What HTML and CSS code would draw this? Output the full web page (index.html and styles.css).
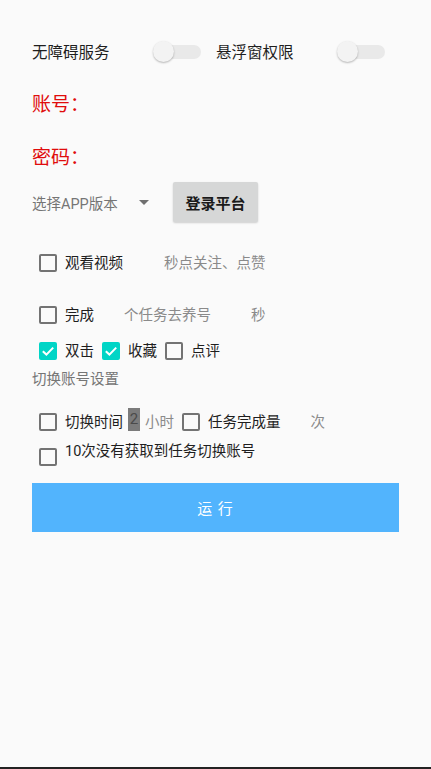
FILE: index.html
```html
<!DOCTYPE html>
<html lang="zh-CN">
<head>
<meta charset="utf-8">
<title>设置</title>
<link rel="stylesheet" href="styles.css">
</head>
<body>
<div class="screen">
  <main class="content">
    <div class="row row-switches">
      <span class="switch-label">无障碍服务</span>
      <span class="switch"><span class="track"></span><span class="thumb"></span></span>
      <span class="switch-label second">悬浮窗权限</span>
      <span class="switch"><span class="track"></span><span class="thumb"></span></span>
    </div>
    <div class="row row-field first-field"><span class="field-label">账号：</span></div>
    <div class="row row-field second-field"><span class="field-label">密码：</span></div>
    <div class="row row-select">
      <span class="select-text">选择APP版本</span>
      <span class="caret"></span>
      <span class="btn-login">登录平台</span>
    </div>
    <div class="row row-check r-watch">
      <span class="cb"></span><span class="lbl">观看视频</span>
      <span class="hint h-watch">秒点关注、点赞</span>
    </div>
    <div class="row row-check r-done">
      <span class="cb"></span><span class="lbl">完成</span>
      <span class="hint h-task">个任务去养号</span>
      <span class="hint h-sec">秒</span>
    </div>
    <div class="row row-check r-opts">
      <span class="cb checked"><svg viewBox="0 0 18 18" width="18" height="18"><path d="M3.8 9.2 L7.4 12.6 L14.2 5.6" fill="none" stroke="#fff" stroke-width="2"/></svg></span><span class="lbl">双击</span>
      <span class="cb checked"><svg viewBox="0 0 18 18" width="18" height="18"><path d="M3.8 9.2 L7.4 12.6 L14.2 5.6" fill="none" stroke="#fff" stroke-width="2"/></svg></span><span class="lbl">收藏</span>
      <span class="cb"></span><span class="lbl">点评</span>
    </div>
    <div class="row section-title">切换账号设置</div>
    <div class="row row-check r-switch">
      <span class="cb"></span><span class="lbl">切换时间</span>
      <span class="num">2</span>
      <span class="hint h-hour">小时</span>
      <span class="cb"></span><span class="lbl">任务完成量</span>
      <span class="hint h-times">次</span>
    </div>
    <div class="row row-check r-ten">
      <span class="cb"></span><span class="lbl">10次没有获取到任务切换账号</span>
    </div>
    <div class="btn-run">运 行</div>
  </main>
  <div class="bottom-bar"></div>
</div>
</body>
</html>
```
FILE: styles.css
```css
* { box-sizing: border-box; }
html, body { margin: 0; padding: 0; }
body {
  background: #fafafa;
  font-family: Roboto, "Noto Sans CJK SC", "Noto Sans", sans-serif;
  color: #1e1e1e;
}
.screen {
  height: 769px;
  display: flex;
  flex-direction: column;
}
.content {
  flex: 1;
  padding: 36px 32px 0 32px;
  display: flex;
  flex-direction: column;
}
.row {
  display: flex;
  align-items: center;
}
.row-switches { height: 32px; font-size: 15.5px; }
.switch-label { width: 80px; line-height: 20px; padding-top: 2px; }
.switch-label.second { margin-left: 15px; }
.switch {
  position: relative;
  width: 48px;
  height: 22px;
  margin-left: 41px;
}
.switch .track {
  position: absolute;
  left: 4px; right: 0; top: 4px;
  height: 14px;
  border-radius: 7px;
  background: #e9e9e9;
}
.switch .thumb {
  position: absolute;
  left: 0; top: 0;
  width: 21px; height: 21px;
  border-radius: 50%;
  background: #f3f3f3;
  box-shadow: 0 1px 2px rgba(0,0,0,0.28);
}
.row-field { height: 40px; }
.first-field { margin-top: 17px; }
.second-field { margin-top: 13px; }
.field-label { color: #e00c0c; font-size: 19px; line-height: 24px; }
.row-select { height: 40px; margin-top: 4px; }
.select-text { color: #757575; font-size: 14.5px; width: 107px; }
.caret {
  width: 0; height: 0;
  border-left: 5px solid transparent;
  border-right: 5px solid transparent;
  border-top: 5px solid #6f6f6f;
  margin-top: 1px;
}
.btn-login {
  margin-left: 24px;
  width: 85px; height: 40px;
  background: #d6d7d7;
  border-radius: 2px;
  box-shadow: 0 1px 2px rgba(0,0,0,0.18);
  font-size: 15px; font-weight: bold;
  display: flex; align-items: center; justify-content: center;
  color: #1a1a1a;
}
.row-check { height: 30px; font-size: 14.5px; }
.cb {
  width: 18px; height: 18px;
  margin-left: 7px;
  margin-right: 8px;
  border: 2px solid #737373;
  border-radius: 2px;
  flex: none;
  display: flex;
}
.cb.checked {
  border: none;
  background: #00d5c6;
}
.lbl { line-height: 20px; padding-right: 1px; padding-top: 2px; }
.hint { color: #8a8a8a; line-height: 20px; padding-right: 1px; padding-top: 2px; }
.r-watch { margin-top: 26px; }
.h-watch { margin-left: 40px; }
.r-done { margin-top: 22px; }
.h-task { margin-left: 29px; }
.h-sec { margin-left: 39px; }
.r-opts { margin-top: 6px; }
.section-title {
  height: 22px;
  color: #757575;
  font-size: 14.5px;
}
.r-switch { margin-top: 19px; }
.num {
  margin-left: 4px;
  width: 12px; height: 23px;
  background: #7b7b7b;
  color: #4a4a4a;
  font-size: 15px;
  display: flex; align-items: center; justify-content: center;
  margin-top: -6px;
}
.h-hour { margin-left: 5px; }
.h-times { margin-left: 29px; }
.r-ten {
  height: 36px;
  margin-top: 3px;
  align-items: flex-start;
}
.r-ten .cb { margin-top: 8px; }
.r-ten .lbl { line-height: 22px; padding-top: 1px; }
.btn-run {
  margin-top: 7px;
  height: 49px;
  background: #52b4fd;
  color: #ffffff;
  font-size: 15px;
  display: flex; align-items: center; justify-content: center;
  letter-spacing: 1px;
}
.bottom-bar { height: 2px; background: #222222; }
```
